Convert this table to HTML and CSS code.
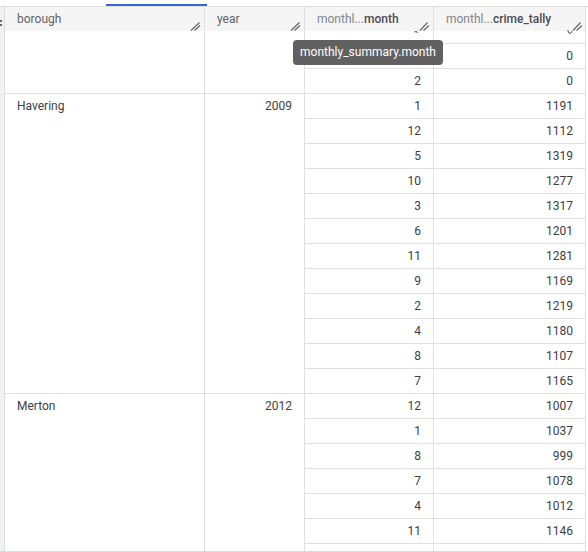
FILE: index.html
```html
<!DOCTYPE html>
<html>
<head>
<meta charset="utf-8">
<link rel="stylesheet" href="styles.css">
</head>
<body>
<div class="page">
  <div class="tabbar"><div class="tab-indicator"></div></div>
  <div class="sheet">
    <div class="gutter"><div class="handle"><span></span><span></span></div></div>
    <div class="table">
      <div class="thead">
        <div class="th"><span class="label">borough</span>
          <svg class="rz" width="11" height="9" viewBox="0 0 11 9"><path d="M1 8.5 L9.5 0.5 M4.5 8.5 L10 3.5" /></svg></div>
        <div class="th"><span class="label">year</span>
          <svg class="rz" width="11" height="9" viewBox="0 0 11 9"><path d="M1 8.5 L9.5 0.5 M4.5 8.5 L10 3.5" /></svg></div>
        <div class="th"><span class="label"><span class="dim">monthl...</span><span class="strong">month</span></span>
          <svg class="rz sort" width="16" height="13" viewBox="0 0 16 13"><path d="M6 8.5 L13.5 0.5 M9.5 8.5 L15 3.5" /><path d="M0.5 10 Q3 9 3.5 11" /></svg></div>
        <div class="th"><span class="label"><span class="dim">monthl...</span><span class="strong">crime_tally</span></span>
          <svg class="rz sort" width="16" height="13" viewBox="0 0 16 13"><path d="M6 8.5 L13.5 0.5 M9.5 8.5 L15 3.5" /><path d="M0.8 8 Q1.5 11.5 3.2 11.5 Q4.6 11.5 5 9" /></svg></div>
      </div>
      <div class="tbody">
        <div class="grid">
          <div class="td grp g3"></div>
          <div class="td grp g3 num"></div>
          <div class="td num"></div><div class="td num"></div>
          <div class="td num"></div><div class="td num">0</div>
          <div class="td num">2</div><div class="td num">0</div>

          <div class="td grp g12">Havering</div>
          <div class="td grp g12 num">2009</div>
          <div class="td num">1</div><div class="td num">1191</div>
          <div class="td num">12</div><div class="td num">1112</div>
          <div class="td num">5</div><div class="td num">1319</div>
          <div class="td num">10</div><div class="td num">1277</div>
          <div class="td num">3</div><div class="td num">1317</div>
          <div class="td num">6</div><div class="td num">1201</div>
          <div class="td num">11</div><div class="td num">1281</div>
          <div class="td num">9</div><div class="td num">1169</div>
          <div class="td num">2</div><div class="td num">1219</div>
          <div class="td num">4</div><div class="td num">1180</div>
          <div class="td num">8</div><div class="td num">1107</div>
          <div class="td num">7</div><div class="td num">1165</div>

          <div class="td grp g7">Merton</div>
          <div class="td grp g7 num">2012</div>
          <div class="td num">12</div><div class="td num">1007</div>
          <div class="td num">1</div><div class="td num">1037</div>
          <div class="td num">8</div><div class="td num">999</div>
          <div class="td num">7</div><div class="td num">1078</div>
          <div class="td num">4</div><div class="td num">1012</div>
          <div class="td num">11</div><div class="td num">1146</div>
          <div class="td num"></div><div class="td num"></div>
        </div>
      </div>
    </div>
  </div>
  <div class="tooltip">monthly_summary.month</div>
</div>
</body>
</html>
```
FILE: styles.css
```css
* { box-sizing: border-box; }
html, body { margin: 0; padding: 0; background: #fff; }
body {
  font-family: Roboto, "Noto Sans", Arial, sans-serif;
  font-size: 12px;
  color: #3c4043;
}
.page {
  position: relative;
  width: 588px;
  height: 552px;
  overflow: hidden;
  display: flex;
  flex-direction: column;
}
.tabbar {
  height: 7px;
  border-bottom: 1px solid #e0e0e0;
  padding-top: 4px;
}
.tab-indicator {
  margin-left: 106px;
  width: 101px;
  height: 2px;
  background: #3367d6;
}
.sheet {
  display: flex;
  border-bottom: 1px solid #dadce0;
}
.gutter {
  width: 5px;
  flex: none;
  background: #f1f1f1;
  border-right: 1px solid #dadce0;
}
.handle {
  margin-top: 13px;
  display: flex;
  flex-direction: column;
  gap: 2px;
}
.handle span {
  display: block;
  width: 2px;
  height: 2px;
  background: #5f6368;
}
.table {
  width: 581px;
  flex: none;
}
.thead {
  display: grid;
  grid-template-columns: 200px 100px 129px 152px;
  height: 24px;
  background: #f5f5f5;
}
.th {
  display: flex;
  justify-content: space-between;
  border-right: 1px solid #e0e0e0;
  padding: 0 3px 0 12px;
  min-width: 0;
}
.th:nth-child(4) { padding-right: 2px; }
.label {
  padding-top: 4px;
  line-height: 16px;
  color: #5f6368;
  white-space: nowrap;
}
.label .dim { color: #80868b; }
.label .strong { color: #4a4e53; font-weight: 500; }
.rz {
  align-self: flex-end;
  overflow: visible;
  flex: none;
}
.rz path {
  fill: none;
  stroke: #5f6368;
  stroke-width: 1.1;
}
.rz.sort { margin-bottom: -4px; }
.tbody {
  height: 520px;
  overflow: hidden;
}
.grid {
  margin-top: -12px;
  display: grid;
  grid-template-columns: 200px 100px 129px 152px;
  grid-auto-rows: 25px;
}
.td {
  border-right: 1px solid #e0e0e0;
  border-bottom: 1px solid #e0e0e0;
  padding: 0 12px;
  line-height: 24px;
  white-space: nowrap;
}
.num { text-align: right; }
.g3 { grid-row: span 3; }
.g12 { grid-row: span 12; }
.g7 { grid-row: span 7; }
.tooltip {
  position: absolute;
  left: 293px;
  top: 40px;
  width: 150px;
  height: 25px;
  border-radius: 4px;
  background: #616161;
  color: #fff;
  font-size: 12px;
  line-height: 25px;
  text-align: center;
}
```
